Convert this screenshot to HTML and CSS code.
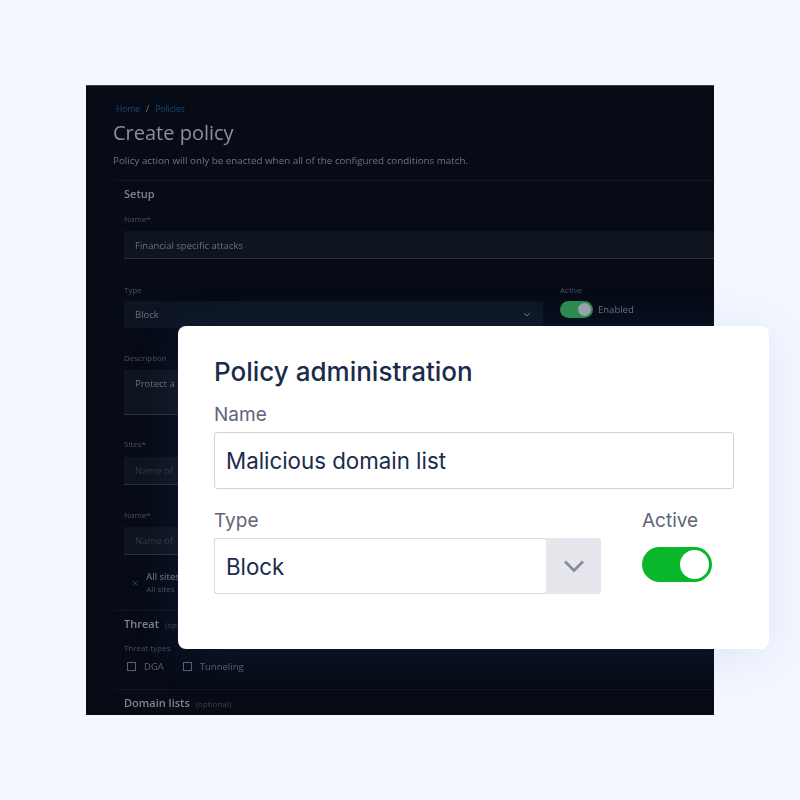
FILE: index.html
```html
<!DOCTYPE html>
<html lang="en">
<head>
<meta charset="utf-8">
<title>Policy administration</title>
<link rel="stylesheet" href="styles.css">
</head>
<body>
<main class="stage">
  <section class="shot">
    <div class="shot-inner">
      <nav class="crumbs"><span class="crumb-link">Home</span><span class="crumb-sep">/</span><span class="crumb-link">Policies</span></nav>
      <h2 class="shot-title">Create policy</h2>
      <p class="shot-desc">Policy action will only be enacted when all of the configured conditions match.</p>
      <div class="group group-setup">
        <h3 class="group-title">Setup</h3>
        <div class="d-label d-label-first">Name*</div>
        <div class="d-field d-field-wide"><span>Financial specific attacks</span></div>
        <div class="d-row">
          <div class="d-col-type">
            <div class="d-label">Type</div>
            <div class="d-field d-select"><span>Block</span>
              <svg class="d-chev" width="8" height="5" viewBox="0 0 8 5"><path d="M1 1l3 3 3-3" fill="none" stroke="#6d7580" stroke-width="1"/></svg>
            </div>
          </div>
          <div class="d-col-active">
            <div class="d-label">Active</div>
            <div class="d-toggle-row"><span class="d-toggle"><span class="d-knob"></span></span><span class="d-enabled">Enabled</span></div>
          </div>
        </div>
        <div class="d-label d-gap-desc">Description</div>
        <div class="d-field d-area"><span>Protect a</span></div>
        <div class="d-label d-gap-sites">Sites*</div>
        <div class="d-field d-dim d-sites"><span>Name of</span></div>
        <div class="d-label d-gap-name">Name*</div>
        <div class="d-field d-dim"><span>Name of</span></div>
        <div class="d-chip">
          <span class="d-x">×</span>
          <div class="d-chip-text"><div class="d-chip-main">All sites</div><div class="d-chip-sub">All sites</div></div>
        </div>
      </div>
      <div class="group group-threat">
        <h3 class="group-title">Threat <small>(optional)</small></h3>
        <div class="d-label d-label-types">Threat types</div>
        <div class="d-checks">
          <span class="d-check"><i class="d-box"></i>DGA</span>
          <span class="d-check"><i class="d-box"></i>Tunneling</span>
        </div>
      </div>
      <div class="group group-lists">
        <h3 class="group-title">Domain lists <small>(optional)</small></h3>
      </div>
    </div>
  </section>

  <section class="card">
    <h1 class="card-title">Policy administration</h1>
    <label class="card-label">Name</label>
    <div class="input">Malicious domain list</div>
    <div class="card-row">
      <div class="col-type">
        <label class="card-label">Type</label>
        <div class="select">
          <span class="select-value">Block</span>
          <span class="select-btn">
            <svg width="20" height="13" viewBox="0 0 20 13"><path d="M1 1.500l9 9 9-9" fill="none" stroke="#8a8c9c" stroke-width="2.800"/></svg>
          </span>
        </div>
      </div>
      <div class="col-active">
        <label class="card-label">Active</label>
        <span class="toggle"><span class="knob"></span></span>
      </div>
    </div>
  </section>
</main>
</body>
</html>
```
FILE: styles.css
```css
* { box-sizing: border-box; }
html, body { margin: 0; padding: 0; }
body { background: #f4f7fe; width: 800px; height: 800px; overflow: hidden; font-family: "Inter", "Liberation Sans", sans-serif; }
.stage { position: relative; width: 800px; height: 800px; padding: 85px 86px; }

.shot { width: 628px; height: 630px; background: #060b16; overflow: hidden; color: #8d939b; font-family: "Open Sans", "Noto Sans", sans-serif; border-top: 1px solid #3a3f49; }
.shot-inner { padding: 17px 0 0 27px; filter: blur(0.5px); }
.crumbs { display: flex; gap: 6px; font-size: 8.500px; line-height: 12px; padding-left: 3px; }
.crumb-link { color: #164a7c; }
.crumb-sep { color: #7b828c; }
.shot-title { margin: 4px 0 0; font-size: 20px; line-height: 28px; font-weight: 400; color: #8b9198; }
.shot-desc { margin: 7px 0 0; font-size: 9.800px; line-height: 14px; color: #6f757d; }

.group { border-top: 1px solid #10161f; padding-left: 11px; }
.group-setup { margin-top: 12px; padding-top: 5px; height: 430px; }
.group-threat { height: 79px; padding-top: 5px; }
.group-lists { padding-top: 5px; }
.group-title { margin: 0; font-size: 11px; line-height: 15px; font-weight: 600; color: #7f858c; }
.group-title small { font-size: 8px; font-weight: 400; color: #3d434c; margin-left: 3px; }

.d-label { font-size: 8px; line-height: 11px; color: #4b515a; }
.d-label-first { margin-top: 12px; }
.d-field { display: flex; align-items: center; height: 28px; margin-top: 7px; padding-left: 11px; background: #0f151e; border-bottom: 1px solid #2a3038; font-size: 9.500px; color: #6b7179; }
.d-field-wide { width: 100%; padding-top: 2px; }
.d-row { display: flex; margin-top: 25px; }
.d-col-type { width: 419px; }
.d-col-active { margin-left: 17px; }
.d-select { justify-content: space-between; height: 27px; margin-top: 6px; padding-right: 12px; background: #0d1523; border-bottom-color: #0d1523; }
.d-toggle-row { display: flex; align-items: center; gap: 5px; margin-top: 6px; }
.d-toggle { display: flex; justify-content: flex-end; align-items: center; width: 33px; height: 17px; border-radius: 9px; background: #2f8a4e; padding: 2px; }
.d-knob { width: 13px; height: 13px; border-radius: 50%; background: #9ca3ad; }
.d-enabled { font-size: 9.500px; color: #6b7179; }
.d-gap-desc { margin-top: 24px; }
.d-area { height: 45px; align-items: flex-start; padding-top: 7px; }
.d-gap-sites { margin-top: 23px; }
.d-dim { color: #333a44; }
.d-sites { margin-top: 8px; }
.d-gap-name { margin-top: 24px; }
.d-chip { display: flex; align-items: center; gap: 8px; margin-top: 15px; padding-left: 8px; }
.d-x { color: #124a80; font-size: 11px; }
.d-chip-main { font-size: 9.500px; line-height: 13px; color: #7b8189; }
.d-chip-sub { font-size: 8px; line-height: 11px; color: #4b515a; }
.d-label-types { margin-top: 10px; }
.d-checks { display: flex; gap: 19px; margin-top: 7px; padding-left: 3px; font-size: 9.500px; line-height: 13px; color: #5b616a; }
.d-check { display: flex; align-items: center; gap: 8px; }
.d-box { display: block; width: 9px; height: 9px; border: 1px solid #5b616a; }

.card { position: absolute; left: 178px; top: 326px; width: 591px; height: 323px; padding: 27px 36px 0; background: #fff; border-radius: 8px; box-shadow: 0 6px 50px rgba(70, 110, 220, 0.13); color: #1a2b4b; }
.card-title { margin: 0 0 12px; font-size: 26px; line-height: 38px; font-weight: 500; color: #1a2b4b; }
.card-label { display: block; font-size: 19px; line-height: 24px; font-weight: 400; color: #5e6579; }
.input { display: flex; align-items: center; width: 520px; height: 57px; margin-top: 5px; padding-left: 11px; border: 1px solid #d0d2d8; border-radius: 3px; font-size: 22.300px; color: #1a2b4b; }
.card-row { display: flex; margin-top: 20px; }
.col-type { width: 387px; }
.col-active { margin-left: 41px; }
.select { display: flex; height: 56px; margin-top: 5px; background: #e6e7ec; border-radius: 3px; }
.select-value { display: flex; align-items: center; flex: 1; padding-left: 11px; background: #fff; border: 1px solid #d8dadf; border-right: 0; border-radius: 3px; font-size: 22.300px; color: #1a2b4b; }
.select-btn { display: flex; align-items: center; justify-content: center; width: 55px; }
.toggle { display: flex; justify-content: flex-end; align-items: center; width: 70px; height: 35px; margin-top: 14px; padding: 3px; border-radius: 18px; background: #09b82a; }
.knob { width: 29px; height: 29px; border-radius: 50%; background: #fff; }
```
